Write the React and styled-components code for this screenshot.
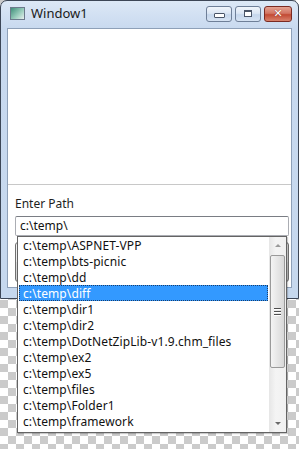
import React from 'react';
import styled, { createGlobalStyle } from 'styled-components';

const GlobalStyle = createGlobalStyle`
  html, body {
    margin: 0;
    padding: 0;
  }
  body {
    width: 299px;
    height: 449px;
    overflow: hidden;
    background-color: #ffffff;
    background-image: conic-gradient(#cbcbcb 25%, #ffffff 0 50%, #cbcbcb 0 75%, #ffffff 0);
    background-size: 16px 16px;
    background-position: 0 4px;
    font-family: "Noto Sans", "Open Sans", sans-serif;
  }
`;

const items = [
  'c:\\temp\\ASPNET-VPP',
  'c:\\temp\\bts-picnic',
  'c:\\temp\\dd',
  'c:\\temp\\diff',
  'c:\\temp\\dir1',
  'c:\\temp\\dir2',
  'c:\\temp\\DotNetZipLib-v1.9.chm_files',
  'c:\\temp\\ex2',
  'c:\\temp\\ex5',
  'c:\\temp\\files',
  'c:\\temp\\Folder1',
  'c:\\temp\\framework',
];

const Stage = styled.div`
  position: relative;
  width: 299px;
  height: 449px;
`;

const Frame = styled.div`
  width: 299px;
  height: 299px;
  box-sizing: border-box;
  border: 1px solid #3c4656;
  border-radius: 7px 7px 0 0;
  background: linear-gradient(#dce8f6 0, #c8d9ef 28px, #c6d8ee 100%);
  display: flex;
  flex-direction: column;
  padding: 0 6px 10px 6px;
`;

const TitleBar = styled.div`
  height: 27px;
  display: flex;
  align-items: center;
  padding-left: 3px;
`;

const AppIcon = styled.div`
  width: 13px;
  height: 11px;
  border: 1px solid #6c7a8c;
  background: linear-gradient(135deg, #3f8f7a, #9fd0c0 60%, #e8f0f0);
  margin-right: 6px;
  margin-top: -2px;
`;

const Title = styled.span`
  font-size: 13px;
  color: #1a1a1a;
  flex: 1;
  margin-top: -3px;
`;

const Caption = styled.div`
  display: flex;
  gap: 3px;
  margin-top: -2px;
`;

const CapButton = styled.div`
  width: ${(p) => (p.close ? '28px' : '26px')};
  height: 16px;
  box-sizing: border-box;
  border: 1px solid ${(p) => (p.close ? '#7a2a22' : '#6e7f98')};
  border-radius: 3px;
  background: ${(p) => (p.close
    ? 'linear-gradient(#e4a292 0, #d27563 45%, #c24a34 55%, #d8826c 100%)'
    : 'linear-gradient(#f0f5fb 0, #dbe6f4 45%, #c5d6ec 55%, #d6e3f3 100%)')};
  display: flex;
  align-items: center;
  justify-content: center;
`;

const MinGlyph = styled.div`
  width: 9px;
  height: 3px;
  margin-top: 4px;
  border: 1px solid #4a5568;
  background: #fff;
  border-radius: 1px;
`;

const MaxGlyph = styled.div`
  width: 6px;
  height: 4px;
  border: 1px solid #4a5568;
  border-top-width: 2px;
  background: #fff;
`;

const CloseGlyph = styled.span`
  color: #fff;
  font-family: "DejaVu Sans", sans-serif;
  font-weight: bold;
  font-size: 11px;
  line-height: 11px;
  text-shadow: 0 0 1px #6a1e14;
`;

const Client = styled.div`
  flex: 1;
  background: #fff;
  border: 1px solid #8ea0b8;
  display: flex;
  flex-direction: column;
`;

const TopPane = styled.div`
  height: 155px;
  border-bottom: 1px solid #c8c8c8;
`;

const Form = styled.div`
  display: flex;
  flex-direction: column;
  padding: 10px 2px 0 7px;
`;

const Label = styled.div`
  font-size: 12px;
  color: #1e1e1e;
  height: 21px;
`;

const TextBox = styled.div`
  height: 20px;
  box-sizing: border-box;
  border: 1px solid #abadb3;
  border-top-color: #7a7d84;
  border-radius: 2px;
  padding: 0 4px;
  font-size: 12px;
  line-height: 18px;
  color: #111;
`;

const Button = styled.div`
  margin-top: 6px;
  height: 40px;
  box-sizing: border-box;
  border: 1px solid #707070;
  border-radius: 3px;
  background: linear-gradient(#f2f2f2, #ebebeb 50%, #dddddd 50%, #cfcfcf);
`;

const Popup = styled.div`
  position: absolute;
  left: 17px;
  top: 236px;
  width: 270px;
  height: 197px;
  box-sizing: border-box;
  border: 1px solid #646464;
  background: #fff;
  display: flex;
  box-shadow: 1px 1px 1px rgba(0, 0, 0, 0.2);
`;

const List = styled.div`
  flex: 1;
  padding: 0 1px;
  display: flex;
  flex-direction: column;
`;

const Item = styled.div`
  height: 16px;
  box-sizing: border-box;
  padding-left: 3px;
  font-size: 12px;
  line-height: 15px;
  letter-spacing: 0.1px;
  white-space: nowrap;
  color: ${(p) => (p.selected ? '#fff' : '#111')};
  background: ${(p) => (p.selected ? '#3399ff' : 'transparent')};
  border: 1px dotted ${(p) => (p.selected ? '#1a3e6a' : 'transparent')};
`;

const ScrollBar = styled.div`
  width: 17px;
  background: linear-gradient(90deg, #e6e6e6, #f4f4f4 40%, #f0f0f0);
  display: flex;
  flex-direction: column;
  align-items: center;
`;

const Arrow = styled.div`
  height: 17px;
  width: 17px;
  display: flex;
  align-items: center;
  justify-content: center;
`;

const Triangle = styled.div`
  width: 0;
  height: 0;
  border-left: 3px solid transparent;
  border-right: 3px solid transparent;
  ${(p) => (p.down
    ? 'border-top: 3px solid #6a6a6a;'
    : 'border-bottom: 3px solid #9a9a9a;')}
`;

const Track = styled.div`
  flex: 1;
  display: flex;
  flex-direction: column;
  align-items: center;
`;

const Thumb = styled.div`
  margin-top: 1px;
  width: 15px;
  height: 113px;
  box-sizing: border-box;
  border: 1px solid #9a9a9a;
  border-radius: 2px;
  background: linear-gradient(90deg, #f4f4f4, #e6e6e6 50%, #d8d8d8);
  display: flex;
  flex-direction: column;
  align-items: center;
  justify-content: center;
  gap: 2px;
`;

const Grip = styled.div`
  width: 7px;
  height: 1px;
  background: #4f4f4f;
  box-shadow: 0 1px 0 #ffffff;
`;

function Scroller() {
  return (
    <ScrollBar>
      <Arrow><Triangle /></Arrow>
      <Track>
        <Thumb>
          <Grip />
          <Grip />
          <Grip />
        </Thumb>
      </Track>
      <Arrow><Triangle down /></Arrow>
    </ScrollBar>
  );
}

export default function App() {
  return (
    <Stage>
      <GlobalStyle />
      <Frame>
        <TitleBar>
          <AppIcon />
          <Title>Window1</Title>
          <Caption>
            <CapButton><MinGlyph /></CapButton>
            <CapButton><MaxGlyph /></CapButton>
            <CapButton close><CloseGlyph>✕</CloseGlyph></CapButton>
          </Caption>
        </TitleBar>
        <Client>
          <TopPane />
          <Form>
            <Label>Enter Path</Label>
            <TextBox>c:\temp\</TextBox>
            <Button />
          </Form>
        </Client>
      </Frame>
      <Popup>
        <List>
          {items.map((it) => (
            <Item key={it} selected={it === 'c:\\temp\\diff'}>{it}</Item>
          ))}
        </List>
        <Scroller />
      </Popup>
    </Stage>
  );
}
